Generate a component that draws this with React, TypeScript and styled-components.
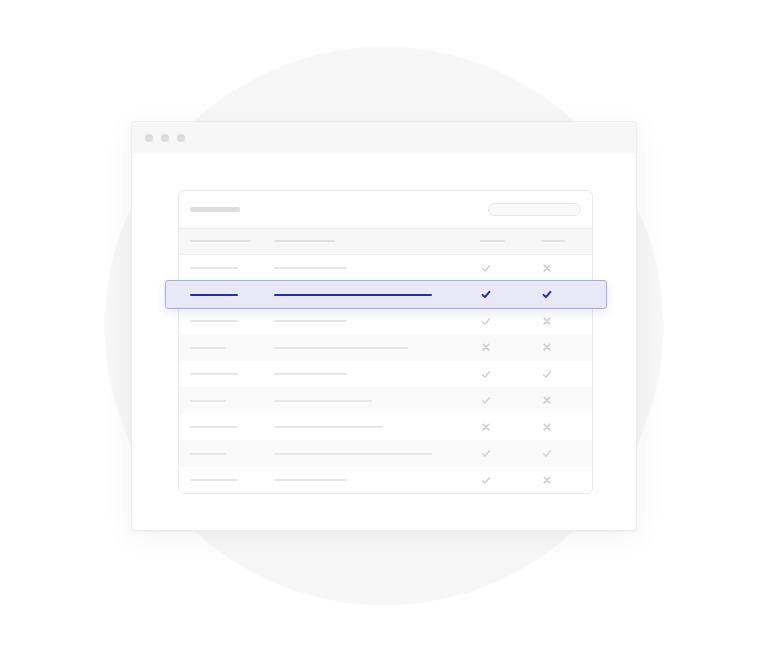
import React from "react";
import styled, { createGlobalStyle } from "styled-components";

const Global = createGlobalStyle`
  html, body { margin: 0; padding: 0; background: #ffffff; }
  body { font-family: "Liberation Sans", Arial, sans-serif; }
  * { box-sizing: border-box; }
`;

const Stage = styled.div`
  width: 768px;
  height: 654px;
  padding-top: 121px;
  display: flex;
  justify-content: center;
  align-items: flex-start;
  background: radial-gradient(circle at 384px 326px, #f7f7f7 0, #f7f7f7 278.5px, #ffffff 280px);
`;

const Window = styled.div`
  width: 506px;
  height: 410px;
  background: #ffffff;
  border: 1px solid #ececec;
  border-radius: 4px;
  box-shadow: 0 6px 32px rgba(0, 0, 0, 0.055), 0 1px 3px rgba(0, 0, 0, 0.03);
  display: flex;
  flex-direction: column;
`;

const TitleBar = styled.div`
  height: 31px;
  background: #f7f7f7;
  border-radius: 3px 3px 0 0;
  display: flex;
  align-items: center;
  gap: 8px;
  padding-left: 13px;
`;

const Dot = styled.span`
  width: 8px;
  height: 8px;
  border-radius: 50%;
  background: #dcdce0;
`;

const Body = styled.div`
  flex: 1;
  padding: 37px 0 0 46px;
`;

const Card = styled.div`
  width: 415px;
  border: 1px solid #e9e9ec;
  border-radius: 6px;
  background: #ffffff;
  display: flex;
  flex-direction: column;
`;

const CardTop = styled.div`
  height: 37px;
  display: flex;
  align-items: center;
  justify-content: space-between;
  padding: 0 11px 0 11px;
`;

const TitlePill = styled.div`
  width: 50px;
  height: 5px;
  border-radius: 3px;
  background: #dcdce2;
`;

const Search = styled.div`
  width: 93px;
  height: 13px;
  border-radius: 7px;
  border: 1px solid #e6e6e8;
  background: #fafafa;
`;

const HeadRow = styled.div`
  height: 26.5px;
  background: #f7f7f7;
  border-top: 1px solid #eeeeee;
  border-bottom: 1px solid #eeeeee;
  display: grid;
  grid-template-columns: 84px 206px 61px 1fr;
  align-items: center;
  padding-left: 11px;
`;

const Rows = styled.div`
  display: flex;
  flex-direction: column;
  border-radius: 0 0 5px 5px;
`;

const Row = styled.div<{ $alt: boolean; $active: boolean }>`
  height: 26.5px;
  display: grid;
  grid-template-columns: 84px 206px 61px 1fr;
  align-items: center;
  padding: 1px 0 0 11px;
  background: ${(p) => (p.$alt ? "#fafafa" : "#ffffff")};
  &:last-child { border-radius: 0 0 5px 5px; }
  ${(p) =>
    p.$active &&
    `
    position: relative;
    z-index: 1;
    height: 28.5px;
    margin: -1px -15px -1px -14px;
    padding-left: 24px;
    background: #e8e8f6;
    border: 1px solid #a9a9e8;
    border-radius: 3px;
    box-shadow: 0 3px 10px rgba(60, 60, 150, 0.12);
  `}
`;

const Line = styled.div<{ $w: number; $active?: boolean; $head?: boolean }>`
  width: ${(p) => p.$w}px;
  height: 2px;
  border-radius: 1px;
  background: ${(p) => (p.$active ? "#2b2bae" : p.$head ? "#e0e0e2" : "#e6e6e6")};
`;

const IconCell = styled.div<{ $active?: boolean }>`
  display: flex;
  align-items: center;
  padding-left: 1px;
  color: ${(p) => (p.$active ? "#2a2a9c" : "#c9c9cc")};
`;

const Check = ({ bold }: { bold?: boolean }) => (
  <svg width="10" height="9" viewBox="0 0 10 9" fill="none">
    <path
      d="M1.6 4.9 L3.9 7.1 L8.4 1.8"
      stroke="currentColor"
      strokeWidth={bold ? 2 : 1.3}
      strokeLinecap="round"
      strokeLinejoin="round"
    />
  </svg>
);

const Cross = () => (
  <svg width="10" height="9" viewBox="0 0 10 9" fill="none">
    <path
      d="M2.2 1.3 L7.8 6.9 M7.8 1.3 L2.2 6.9"
      stroke="currentColor"
      strokeWidth={1.5}
      strokeLinecap="round"
    />
  </svg>
);

type R = { c1: number; c2: number; a: boolean; b: boolean; active?: boolean };

const rows: R[] = [
  { c1: 48, c2: 73, a: true, b: false },
  { c1: 48, c2: 158, a: true, b: true, active: true },
  { c1: 48, c2: 73, a: true, b: false },
  { c1: 36, c2: 134, a: false, b: false },
  { c1: 48, c2: 73, a: true, b: true },
  { c1: 36, c2: 98, a: true, b: false },
  { c1: 48, c2: 109, a: false, b: false },
  { c1: 36, c2: 158, a: true, b: true },
  { c1: 48, c2: 73, a: true, b: false },
];

export default function App() {
  return (
    <>
      <Global />
      <Stage>
        <Window>
          <TitleBar>
            <Dot />
            <Dot />
            <Dot />
          </TitleBar>
          <Body>
            <Card>
              <CardTop>
                <TitlePill />
                <Search />
              </CardTop>
              <HeadRow>
                <Line $w={61} $head />
                <Line $w={61} $head />
                <Line $w={25} $head />
                <Line $w={24} $head />
              </HeadRow>
              <Rows>
                {rows.map((r, i) => (
                  <Row key={i} $alt={i % 2 === 1} $active={!!r.active}>
                    <Line $w={r.c1} $active={r.active} />
                    <Line $w={r.c2} $active={r.active} />
                    <IconCell $active={r.active}>
                      {r.a ? <Check bold={r.active} /> : <Cross />}
                    </IconCell>
                    <IconCell $active={r.active}>
                      {r.b ? <Check bold={r.active} /> : <Cross />}
                    </IconCell>
                  </Row>
                ))}
              </Rows>
            </Card>
          </Body>
        </Window>
      </Stage>
    </>
  );
}
